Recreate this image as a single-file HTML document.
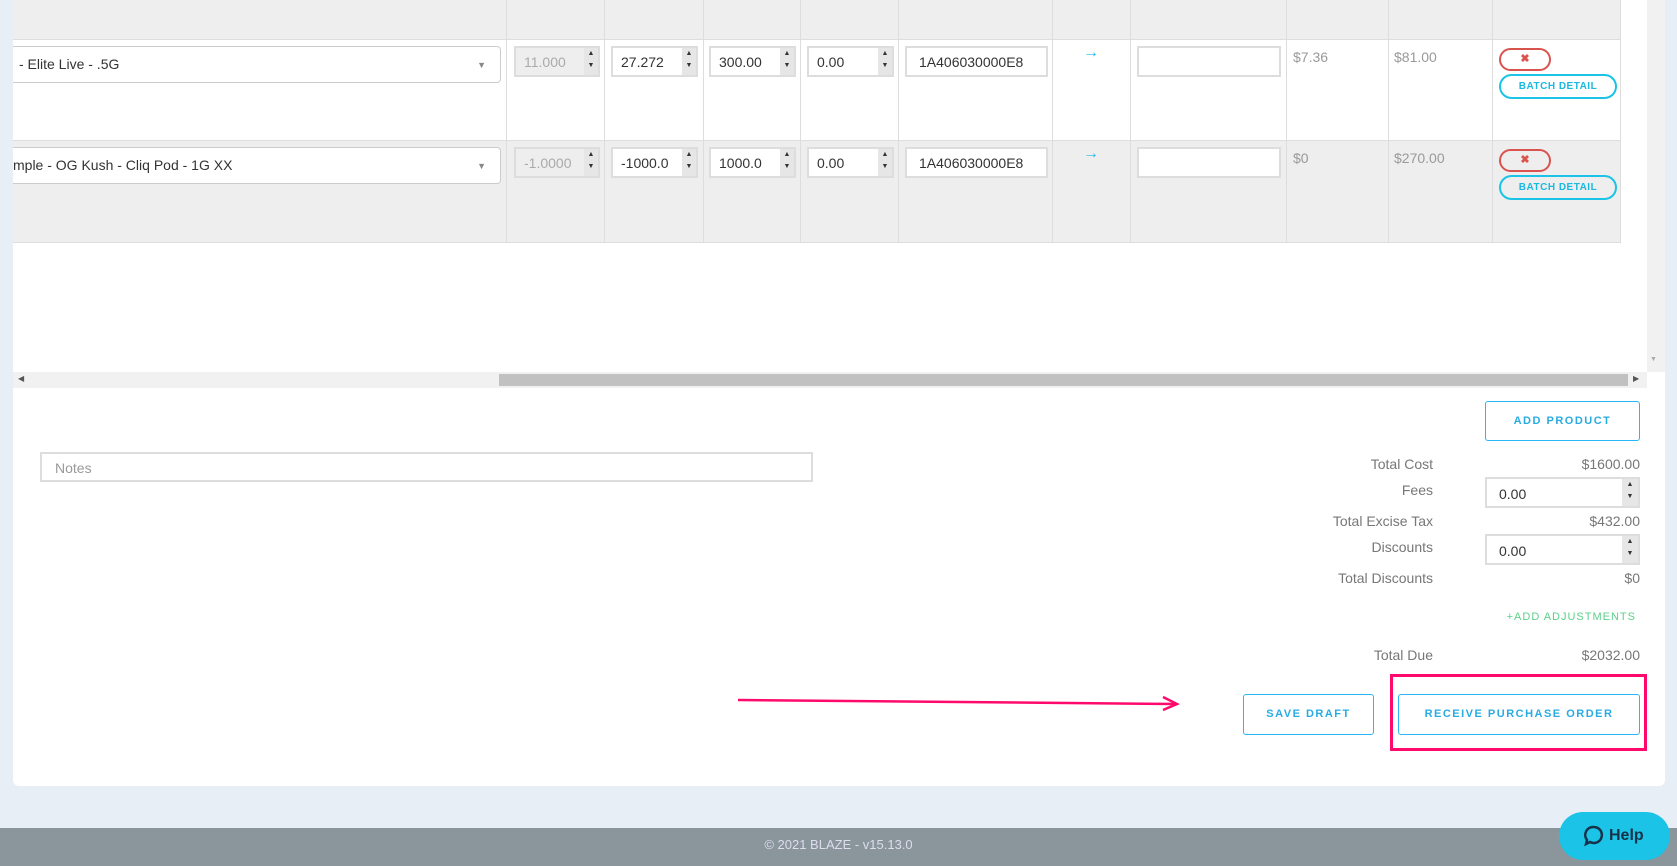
<!DOCTYPE html>
<html><head><meta charset="utf-8"><style>
*{box-sizing:border-box;margin:0;padding:0}
body{width:1677px;height:866px;background:#e8eef5;font-family:"Liberation Sans",sans-serif;position:relative;overflow:hidden;color:#555}
.abs{position:absolute}
.card{left:13px;top:0;width:1652px;height:786px;background:#fff;border-radius:0 0 6px 6px}
.row{left:13px;width:1608px;border-bottom:1px solid #ddd}
.vl{position:absolute;top:0;bottom:0;width:1px;background:#ddd}
.inp{position:absolute;height:31px;background:#fff;border:2px solid #ddd;font-size:14px;color:#333;padding:6px 8px;white-space:nowrap;overflow:hidden}
.spin{position:absolute;right:0;top:0;bottom:0;width:14px;background:#e6e6e6;font-size:7px;line-height:12px;text-align:center;color:#333}
.lbl{position:absolute;right:244px;font-size:14px;color:#777;text-align:right}
.val{position:absolute;right:37px;font-size:14px;color:#777;text-align:right}
.btn{position:absolute;border:1px solid #29b6f6;border-radius:3px;color:#29abe2;font-weight:bold;font-size:11px;letter-spacing:1.5px;text-align:center;background:#fff}
.pill{position:absolute;border:2px solid;border-radius:14px;font-weight:bold;text-align:center}
.arr{position:absolute;left:1070px;top:4px;color:#1bb8e8;font-size:16px;font-weight:bold}
</style></head><body>
<div class="abs card"></div>
<div class="abs row" style="top:0;height:40px;background:#eee">
 <div class="vl" style="left:493px"></div><div class="vl" style="left:591px"></div><div class="vl" style="left:690px"></div><div class="vl" style="left:787px"></div><div class="vl" style="left:885px"></div><div class="vl" style="left:1039px"></div><div class="vl" style="left:1117px"></div><div class="vl" style="left:1273px"></div><div class="vl" style="left:1375px"></div><div class="vl" style="left:1479px"></div><div class="vl" style="left:1607px"></div>
</div>
<div class="abs row" style="top:40px;height:101px;background:#fff">
 <div class="vl" style="left:493px"></div><div class="vl" style="left:591px"></div><div class="vl" style="left:690px"></div><div class="vl" style="left:787px"></div><div class="vl" style="left:885px"></div><div class="vl" style="left:1039px"></div><div class="vl" style="left:1117px"></div><div class="vl" style="left:1273px"></div><div class="vl" style="left:1375px"></div><div class="vl" style="left:1479px"></div><div class="vl" style="left:1607px"></div>
 <div class="inp" style="left:0;top:6px;width:488px;height:37px;border:1px solid #ccc;border-left:none;border-radius:0 4px 4px 0;padding:9px 6px;font-size:14px">- Elite Live - .5G<span style="position:absolute;right:14px;top:13px;color:#888;font-size:9px">▼</span></div>
 <div class="inp" style="left:501px;top:6px;width:86px;background:#eee;color:#aaa">11.000<div class="spin">▲<br>▼</div></div>
 <div class="inp" style="left:598px;top:6px;width:87px">27.272<div class="spin">▲<br>▼</div></div>
 <div class="inp" style="left:696px;top:6px;width:87px">300.00<div class="spin">▲<br>▼</div></div>
 <div class="inp" style="left:794px;top:6px;width:87px">0.00<div class="spin">▲<br>▼</div></div>
 <div class="inp" style="left:892px;top:6px;width:143px;padding-left:12px">1A406030000E8</div>
 <div class="arr">→</div>
 <div class="inp" style="left:1124px;top:6px;width:144px"></div>
 <div class="abs" style="left:1280px;top:9px;font-size:14px;color:#999">$7.36</div>
 <div class="abs" style="left:1381px;top:9px;font-size:14px;color:#999">$81.00</div>
 <div class="pill" style="left:1486px;top:8px;width:52px;height:23px;border-color:#d9534f;color:#d9534f;font-size:11px;line-height:19px">✖</div>
 <div class="pill" style="left:1486px;top:34px;width:118px;height:25px;border-color:#1bc3e6;color:#1bb8e0;font-size:10px;line-height:21px;letter-spacing:.5px">BATCH DETAIL</div>
</div>
<div class="abs row" style="top:141px;height:102px;background:#eee">
 <div class="vl" style="left:493px"></div><div class="vl" style="left:591px"></div><div class="vl" style="left:690px"></div><div class="vl" style="left:787px"></div><div class="vl" style="left:885px"></div><div class="vl" style="left:1039px"></div><div class="vl" style="left:1117px"></div><div class="vl" style="left:1273px"></div><div class="vl" style="left:1375px"></div><div class="vl" style="left:1479px"></div><div class="vl" style="left:1607px"></div>
 <div class="inp" style="left:0;top:6px;width:488px;height:37px;border:1px solid #ccc;border-left:none;border-radius:0 4px 4px 0;padding:9px 0;font-size:14px">mple - OG Kush - Cliq Pod - 1G XX<span style="position:absolute;right:14px;top:13px;color:#888;font-size:9px">▼</span></div>
 <div class="inp" style="left:501px;top:6px;width:86px;background:#eee;color:#aaa">-1.0000<div class="spin">▲<br>▼</div></div>
 <div class="inp" style="left:598px;top:6px;width:87px">-1000.0<div class="spin">▲<br>▼</div></div>
 <div class="inp" style="left:696px;top:6px;width:87px">1000.0<div class="spin">▲<br>▼</div></div>
 <div class="inp" style="left:794px;top:6px;width:87px">0.00<div class="spin">▲<br>▼</div></div>
 <div class="inp" style="left:892px;top:6px;width:143px;padding-left:12px">1A406030000E8</div>
 <div class="arr">→</div>
 <div class="inp" style="left:1124px;top:6px;width:144px"></div>
 <div class="abs" style="left:1280px;top:9px;font-size:14px;color:#999">$0</div>
 <div class="abs" style="left:1381px;top:9px;font-size:14px;color:#999">$270.00</div>
 <div class="pill" style="left:1486px;top:8px;width:52px;height:23px;border-color:#d9534f;color:#d9534f;font-size:11px;line-height:19px">✖</div>
 <div class="pill" style="left:1486px;top:34px;width:118px;height:25px;border-color:#1bc3e6;color:#1bb8e0;font-size:10px;line-height:21px;letter-spacing:.5px">BATCH DETAIL</div>
</div>
<div class="abs" style="left:1647px;top:0;width:18px;height:372px;background:#f1f1f1"></div>
<div class="abs" style="left:1650px;top:356px;font-size:7px;color:#aaa">▼</div>
<div class="abs" style="left:13px;top:372px;width:1634px;height:16px;background:#f1f1f1"></div>
<div class="abs" style="left:499px;top:374px;width:1129px;height:12px;background:#c1c1c1"></div>
<div class="abs" style="left:18px;top:374px;font-size:8px;color:#555">◀</div>
<div class="abs" style="left:1633px;top:374px;font-size:8px;color:#555">▶</div>
<div class="btn" style="left:1485px;top:401px;width:155px;height:40px;line-height:38px">ADD PRODUCT</div>
<div class="inp" style="left:40px;top:452px;width:773px;height:30px;color:#999;padding:6px 13px">Notes</div>
<div class="lbl" style="top:456px">Total Cost</div><div class="val" style="top:456px">$1600.00</div>
<div class="lbl" style="top:482px">Fees</div>
<div class="inp" style="left:1485px;top:477px;width:155px;height:31px;padding:7px 12px">0.00<div class="spin" style="width:16px">▲<br>▼</div></div>
<div class="lbl" style="top:513px">Total Excise Tax</div><div class="val" style="top:513px">$432.00</div>
<div class="lbl" style="top:539px">Discounts</div>
<div class="inp" style="left:1485px;top:534px;width:155px;height:31px;padding:7px 12px">0.00<div class="spin" style="width:16px">▲<br>▼</div></div>
<div class="lbl" style="top:570px">Total Discounts</div><div class="val" style="top:570px">$0</div>
<div class="abs" style="right:41px;top:611px;font-size:11px;color:#5cd08a;letter-spacing:1px">+ADD ADJUSTMENTS</div>
<div class="lbl" style="top:647px">Total Due</div><div class="val" style="top:647px">$2032.00</div>
<div class="btn" style="left:1243px;top:694px;width:131px;height:41px;line-height:39px">SAVE DRAFT</div>
<div class="btn" style="left:1398px;top:694px;width:242px;height:41px;line-height:39px">RECEIVE PURCHASE ORDER</div>
<div class="abs" style="left:1390px;top:674px;width:257px;height:77px;border:3px solid #ff0a6c"></div>
<svg class="abs" style="left:735px;top:690px" width="450" height="25"><line x1="3" y1="10" x2="440" y2="14" stroke="#ff0a6c" stroke-width="2.5"/><path d="M428 7 L442 14 L428 20" fill="none" stroke="#ff0a6c" stroke-width="2.5"/></svg>
<div class="abs" style="left:0;top:828px;width:1677px;height:38px;background:#8a959c;color:#dde;font-size:13px;text-align:center;line-height:34px">© 2021 BLAZE - v15.13.0</div>
<div class="abs" style="left:1559px;top:812px;width:111px;height:48px;border-radius:24px;background:#1bc3e6;color:#16324a;font-weight:bold;font-size:16px;line-height:48px;padding-left:50px">Help</div>
<svg class="abs" style="left:1583px;top:825px" width="22" height="22"><path d="M11 2a8 8 0 1 1-4 15l-4 2 1-4a8 8 0 0 1 7-13z" fill="none" stroke="#16324a" stroke-width="2.5"/></svg>
</body></html>
